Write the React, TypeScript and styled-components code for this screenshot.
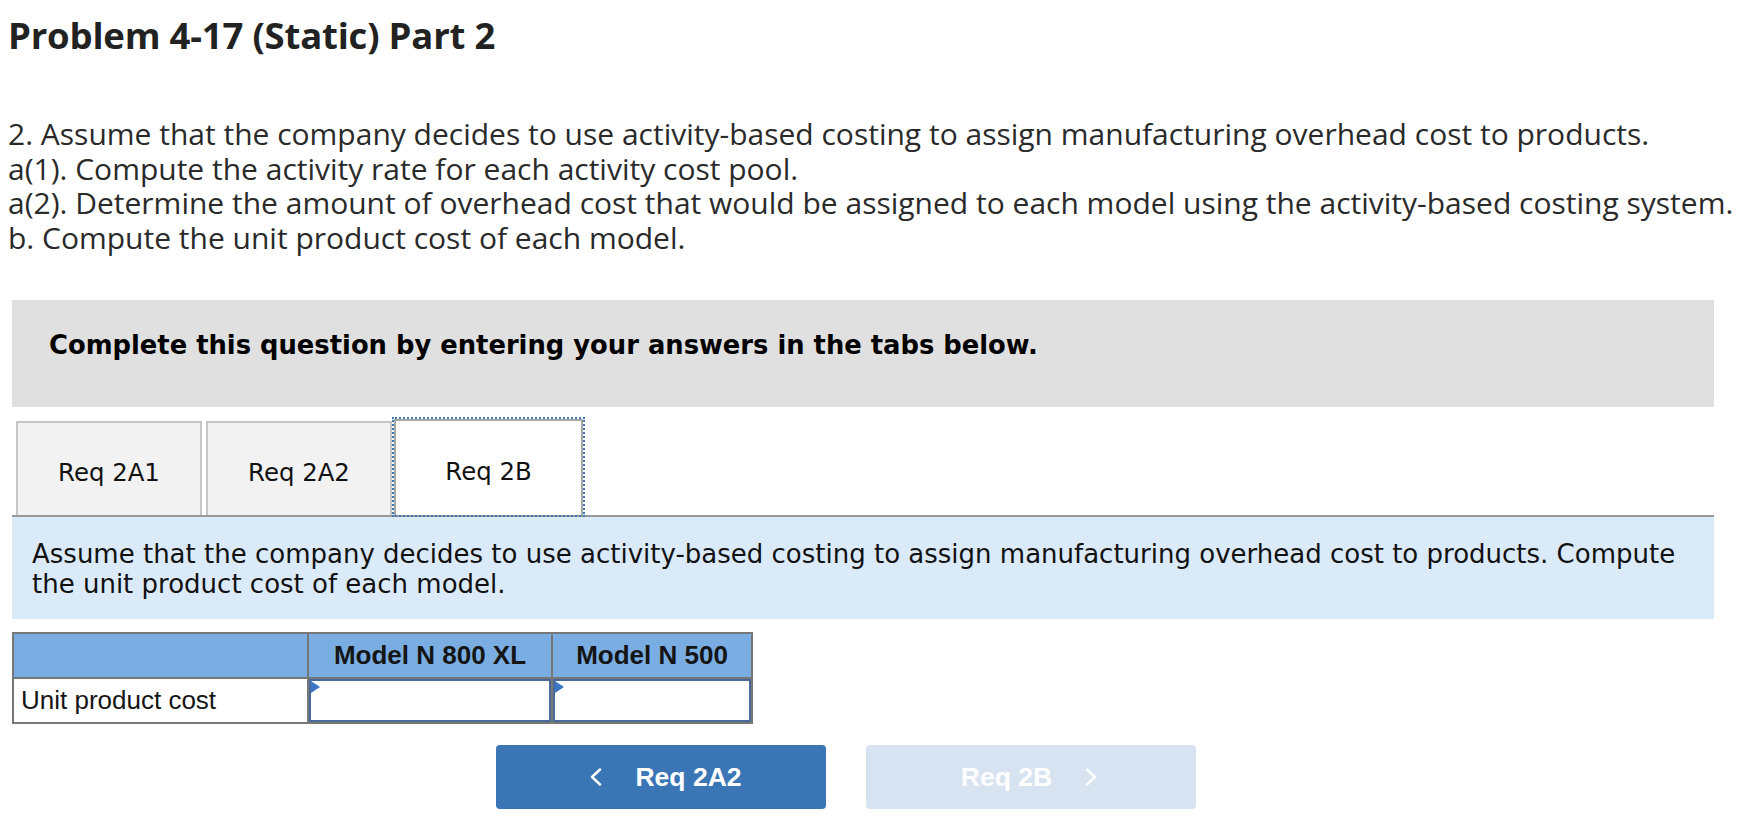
import React from 'react';
import styled, { createGlobalStyle } from 'styled-components';

const GlobalStyle = createGlobalStyle`
  html, body {
    margin: 0;
    padding: 0;
    background: #ffffff;
  }
  body {
    font-family: "Open Sans", Lato, sans-serif;
    color: #222222;
  }
`;

const Page = styled.div`
  padding: 0 0 30px 8px;
`;

const Title = styled.h1`
  margin: 13px 0 0;
  font-family: "Open Sans", Lato, sans-serif;
  font-size: 36.5px;
  line-height: 44px;
  font-weight: 700;
  letter-spacing: -0.2px;
  color: #222222;
`;

const Prompt = styled.div`
  margin-top: 60px;
  font-size: 30px;
  line-height: 34.5px;
  color: #2a2a2a;
`;

const PromptLine = styled.div`
  white-space: nowrap;
`;

const Question = styled.div`
  margin: 45px 0 0 4px;
  width: 1702px;
`;

const Banner = styled.div`
  box-sizing: border-box;
  height: 107px;
  padding: 30px 0 0 37px;
  background: #e0e0e0;
  font-family: Verdana, "DejaVu Sans", sans-serif;
  font-size: 25.8px;
  line-height: 30px;
  font-weight: bold;
  color: #000000;
`;

const TabBar = styled.div`
  display: flex;
  align-items: flex-end;
  gap: 4px;
  margin-top: 12px;
  padding-left: 4px;
  border-bottom: 2px solid #999999;
`;

const Tab = styled.button<{ $active?: boolean }>`
  box-sizing: border-box;
  width: ${(p) => (p.$active ? 189 : 186)}px;
  height: ${(p) => (p.$active ? 96 : 94)}px;
  margin-left: ${(p) => (p.$active ? -2 : 0)}px;
  padding: 6px 0 0;
  background: ${(p) => (p.$active ? '#ffffff' : '#f2f2f2')};
  border: 2px solid ${(p) => (p.$active ? '#a6a6a6' : '#c6c6c6')};
  border-bottom: none;
  outline: ${(p) => (p.$active ? '2px dotted #3f78b8' : 'none')};
  font-family: Verdana, "DejaVu Sans", sans-serif;
  font-size: 24.4px;
  color: #111111;
  cursor: pointer;
`;

const InfoPanel = styled.div`
  padding: 22px 20px 20px;
  background: #daeaf8;
  font-family: Verdana, "DejaVu Sans", sans-serif;
  font-size: 26px;
  line-height: 30px;
  color: #111111;
`;

const Grid = styled.table`
  margin-top: 13px;
  border-collapse: collapse;
  table-layout: fixed;
  font-family: "Liberation Sans", Arial, sans-serif;
  font-size: 26px;
`;

const HeadCell = styled.th<{ $width: number }>`
  width: ${(p) => p.$width}px;
  height: 43px;
  padding: 0;
  background: #7aaee3;
  border: 2px solid #777777;
  font-weight: bold;
  color: #151515;
  text-align: center;
`;

const LabelCell = styled.td`
  height: 43px;
  padding: 0 0 0 7px;
  border: 2px solid #777777;
  color: #151515;
  text-align: left;
`;

const InputCell = styled.td`
  position: relative;
  height: 43px;
  padding: 0;
  border: 2px solid #777777;
`;

const AnswerInput = styled.input`
  display: block;
  box-sizing: border-box;
  width: 100%;
  height: 43px;
  margin: 0;
  border: 2px solid #4a6b9a;
  background: #ffffff;
  outline: none;
`;

const Flag = styled.span`
  position: absolute;
  top: 2px;
  left: 2px;
  width: 0;
  height: 0;
  border-left: 9px solid #3a78c6;
  border-top: 6px solid transparent;
  border-bottom: 6px solid transparent;
`;

const Nav = styled.div`
  display: flex;
  gap: 40px;
  margin-top: 21px;
  padding-left: 484px;
`;

const NavButton = styled.button<{ $disabled?: boolean }>`
  display: flex;
  align-items: center;
  justify-content: center;
  gap: 33px;
  width: 330px;
  height: 64px;
  padding: ${(p) => (p.$disabled ? '0 4px 0 0' : '0 0 0 10px')};
  border: none;
  border-radius: 4px;
  background: ${(p) => (p.$disabled ? '#d7e3f1' : '#3a75b6')};
  color: #ffffff;
  font-family: "Liberation Sans", Arial, sans-serif;
  font-size: 26.5px;
  font-weight: bold;
  cursor: ${(p) => (p.$disabled ? 'default' : 'pointer')};
`;

const Chevron = ({ dir }: { dir: 'left' | 'right' }) => (
  <svg width="12" height="18" viewBox="0 0 12 18">
    <polyline
      points={dir === 'left' ? '10,1.5 2,9 10,16.5' : '2,1.5 10,9 2,16.5'}
      fill="none"
      stroke="#ffffff"
      strokeWidth="2.4"
      strokeLinecap="round"
      strokeLinejoin="round"
    />
  </svg>
);

const tabs = ['Req 2A1', 'Req 2A2', 'Req 2B'];
const models = ['Model N 800 XL', 'Model N 500'];

const App = () => {
  return (
    <Page>
      <GlobalStyle />
      <Title>Problem 4-17 (Static) Part 2</Title>
      <Prompt>
        <PromptLine>
          2. Assume that the company decides to use activity-based costing to assign manufacturing overhead cost to
          products.
        </PromptLine>
        <PromptLine>a(1). Compute the activity rate for each activity cost pool.</PromptLine>
        <PromptLine>
          a(2). Determine the amount of overhead cost that would be assigned to each model using the activity-based
          costing system.
        </PromptLine>
        <PromptLine>b. Compute the unit product cost of each model.</PromptLine>
      </Prompt>
      <Question>
        <Banner>Complete this question by entering your answers in the tabs below.</Banner>
        <TabBar>
          {tabs.map((tab) => (
            <Tab key={tab} $active={tab === 'Req 2B'}>
              {tab}
            </Tab>
          ))}
        </TabBar>
        <InfoPanel>
          Assume that the company decides to use activity-based costing to assign manufacturing overhead cost to
          products. Compute the unit product cost of each model.
        </InfoPanel>
        <Grid>
          <thead>
            <tr>
              <HeadCell $width={293} />
              {models.map((m, i) => (
                <HeadCell key={m} $width={i === 0 ? 242 : 198}>
                  {m}
                </HeadCell>
              ))}
            </tr>
          </thead>
          <tbody>
            <tr>
              <LabelCell>Unit product cost</LabelCell>
              {models.map((m) => (
                <InputCell key={m}>
                  <AnswerInput type="text" aria-label={m} />
                  <Flag />
                </InputCell>
              ))}
            </tr>
          </tbody>
        </Grid>
        <Nav>
          <NavButton>
            <Chevron dir="left" />
            <span>Req 2A2</span>
          </NavButton>
          <NavButton $disabled>
            <span>Req 2B</span>
            <Chevron dir="right" />
          </NavButton>
        </Nav>
      </Question>
    </Page>
  );
};

export default App;
